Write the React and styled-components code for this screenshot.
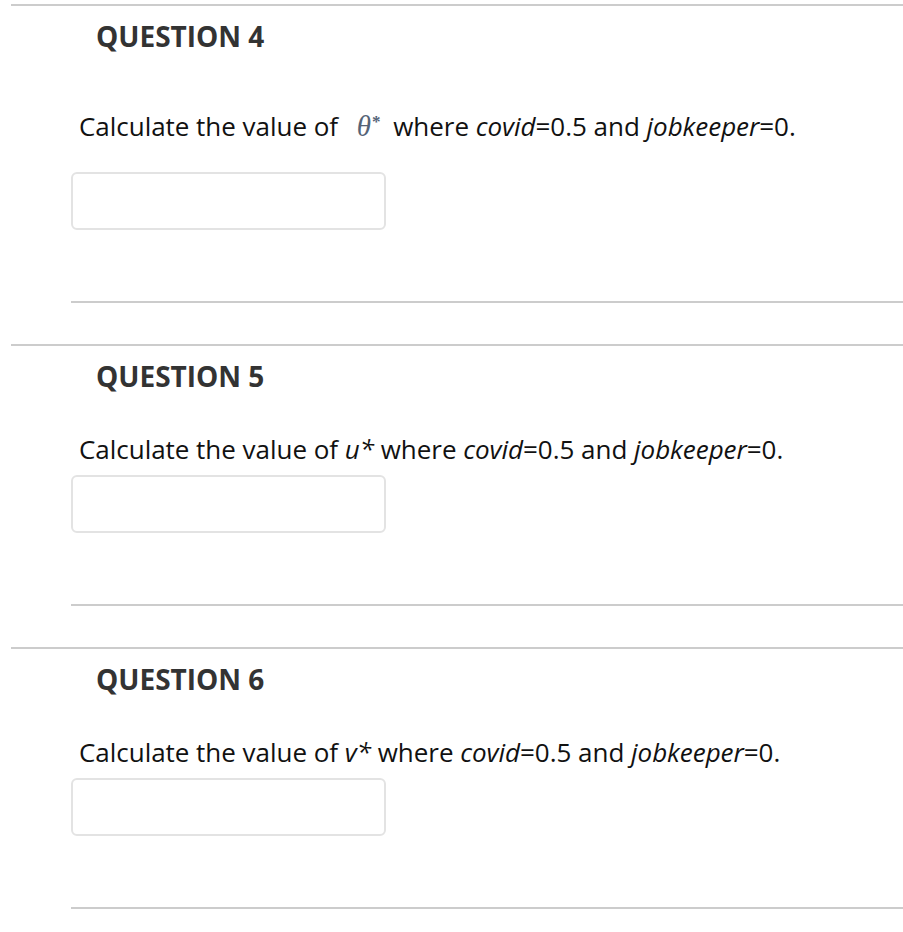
import React from 'react';
import styled, { createGlobalStyle } from 'styled-components';

const GlobalStyle = createGlobalStyle`
  html, body {
    margin: 0;
    padding: 0;
    background: #ffffff;
  }
  body {
    font-family: "Open Sans", "Noto Sans", sans-serif;
    color: #111111;
  }
`;

const Page = styled.div`
  padding: 4px 0 0 11px;
  width: 892px;
`;

const Section = styled.section`
  border-top: 2px solid #cccccc;
  padding-top: 11px;
  margin-bottom: 41px;
`;

const Title = styled.h2`
  margin: 0 0 0 85px;
  font-size: 28px;
  line-height: 39px;
  font-weight: 700;
  color: #333333;
`;

const Body = styled.div`
  margin-left: 60px;
  padding-top: 35px;
  border-bottom: 2px solid #cccccc;
  padding-bottom: 71px;
`;

const Prompt = styled.p`
  margin: 0 0 8px 8px;
  font-size: 26px;
  line-height: 36px;
  letter-spacing: -0.03px;
`;

const Var = styled.em`
  font-style: italic;
`;

const MathFormula = styled.span`
  display: inline-block;
  padding: 17px 6px 20px 12px;
  line-height: 36px;
  font-family: "Liberation Serif", "DejaVu Serif", serif;
  font-style: italic;
  font-size: 29px;
  color: #556377;

  sup {
    font-style: normal;
    font-weight: 700;
    font-size: 17px;
    vertical-align: 9px;
    line-height: 0;
    margin-left: 1px;
  }
`;

const AnswerInput = styled.input`
  display: block;
  box-sizing: border-box;
  width: 315px;
  height: 58px;
  border: 2px solid #e3e3e3;
  border-radius: 6px;
  background: #ffffff;
  outline: none;
`;

const questions = [
  { num: 4, symbol: 'theta' },
  { num: 5, symbol: 'u' },
  { num: 6, symbol: 'v' },
];

const Question = ({ num, symbol }) => (
  <Section>
    <Title>QUESTION {num}</Title>
    <Body>
      <Prompt>
        Calculate the value of{' '}
        {symbol === 'theta' ? (
          <MathFormula>
            θ<sup>*</sup>
          </MathFormula>
        ) : (
          <Var>{symbol}*</Var>
        )}{' '}
        where <Var>covid</Var>=0.5 and <Var>jobkeeper</Var>=0.
      </Prompt>
      <AnswerInput type="text" aria-label={`Answer to question ${num}`} />
    </Body>
  </Section>
);

export default function App() {
  return (
    <Page>
      <GlobalStyle />
      {questions.map((q) => (
        <Question key={q.num} {...q} />
      ))}
    </Page>
  );
}
